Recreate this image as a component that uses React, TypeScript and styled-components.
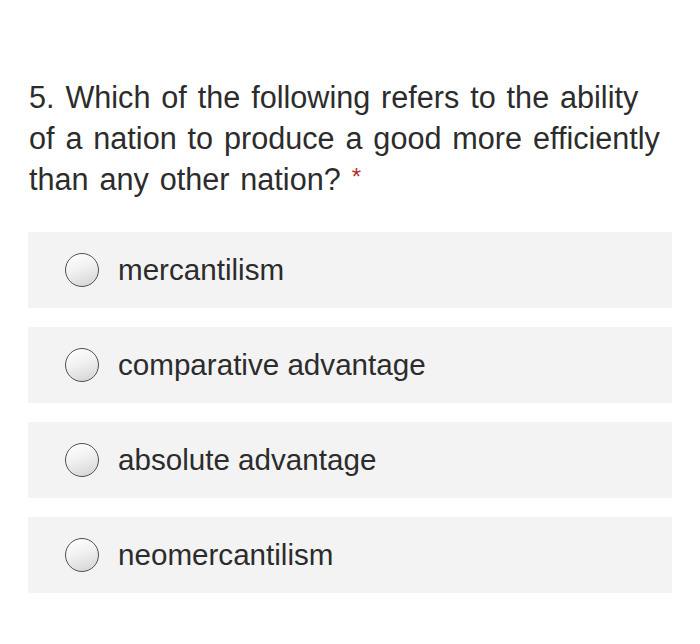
import React from "react";
import styled, { createGlobalStyle } from "styled-components";

const GlobalStyle = createGlobalStyle`
  html, body { margin: 0; padding: 0; background: #ffffff; }
  body { font-family: "Liberation Sans", Arial, Helvetica, sans-serif; }
`;

const Page = styled.div`
  width: 700px;
  height: 644px;
  box-sizing: border-box;
  padding: 77px 28px 0 28px;
  background: #ffffff;
`;

const Question = styled.div`
  font-size: 30.6px;
  line-height: 41px;
  word-spacing: 2.4px;
  color: #2c2c2c;
  padding-left: 1px;
  margin-bottom: 32px;
  white-space: nowrap;
`;

const Required = styled.span`
  color: #b8312b;
  font-size: 24px;
  line-height: 0;
  margin-left: 11px;
  vertical-align: 5px;
`;

const Options = styled.div`
  display: flex;
  flex-direction: column;
  gap: 19px;
`;

const Option = styled.label`
  display: flex;
  align-items: center;
  height: 76px;
  background: #f3f3f3;
  padding-left: 37px;
  box-sizing: border-box;
`;

const Radio = styled.span`
  width: 34px;
  height: 34px;
  box-sizing: border-box;
  border-radius: 50%;
  border: 1.5px solid #505050;
  background: linear-gradient(160deg, #ffffff 0%, #f1f1f1 45%, #d2d2d2 100%);
  flex-shrink: 0;
`;

const OptionText = styled.span`
  margin-left: 19px;
  font-size: 29.6px;
  color: #2c2c2c;
`;

const options = [
  "mercantilism",
  "comparative advantage",
  "absolute advantage",
  "neomercantilism",
];

export default function App() {
  return (
    <>
      <GlobalStyle />
      <Page>
        <Question>
          5. Which of the following refers to the ability
          <br />
          of a nation to produce a good more efficiently
          <br />
          than any other nation?
          <Required>*</Required>
        </Question>
        <Options>
          {options.map((o) => (
            <Option key={o}>
              <Radio />
              <OptionText>{o}</OptionText>
            </Option>
          ))}
        </Options>
      </Page>
    </>
  );
}
